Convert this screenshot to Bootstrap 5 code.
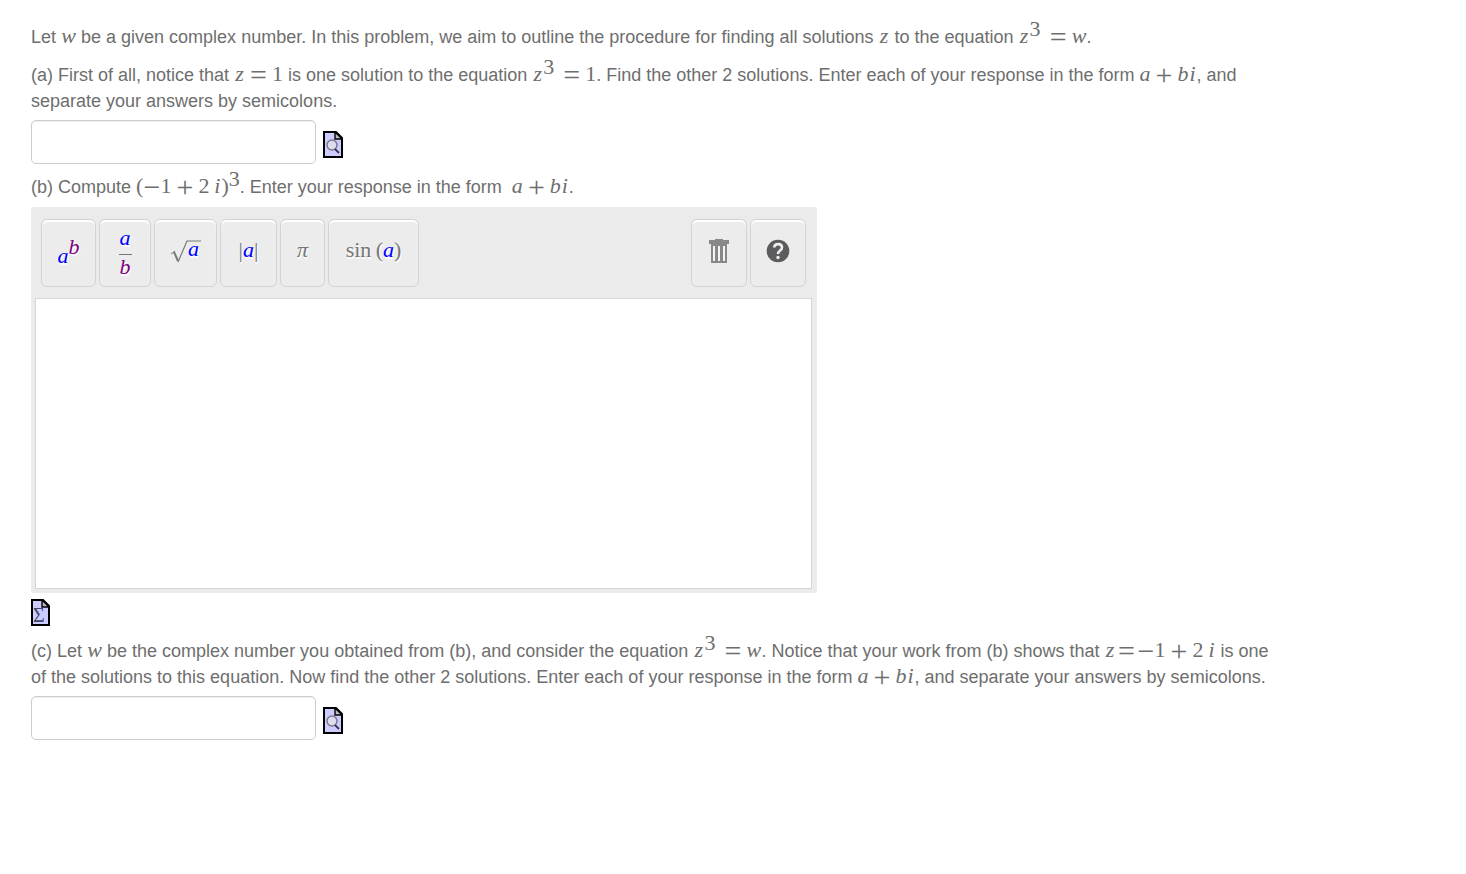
<!DOCTYPE html>
<html lang="en">
<head>
<meta charset="utf-8">
<meta name="viewport" content="width=device-width, initial-scale=1">
<title>Complex cube roots</title>
<link href="https://cdn.jsdelivr.net/npm/bootstrap@5.3.0/dist/css/bootstrap.min.css" rel="stylesheet">
<style>
  body { font: 18px/26px "Liberation Sans", Arial, sans-serif; color: #6e6e6e; background: #fff; }
  .question { max-width: 1310px; padding: 24px 30px 24px 31px; }
  .question p { margin: 0; }

  /* Inline formulas */
  .fm { font-family: "Liberation Serif", "Times New Roman", serif; font-size: 22px; line-height: 0; white-space: nowrap; }
  .fm > * { display: inline-block; text-align: center; line-height: 0; font-size: 22px; }
  .fm i { width: 11px; }
  .fm .wide { width: 15px; }
  .fm .slim { width: 8px; }
  .fm b { font-weight: 400; width: 11px; }
  .fm u { text-decoration: none; width: 27px; font-size: 30px; vertical-align: -4px; }
  .fm u.neg { width: 17px; }
  .fm u.tight { width: 22px; }
  .fm .gap { width: 4px; }
  .fm sup { width: 11px; top: 0; vertical-align: 7px; }

  .answer { width: 285px; height: 44px; border: 1px solid #ccc; border-radius: 5px; box-shadow: inset 0 1px 1px rgba(0,0,0,.075); }
  .page-btn { line-height: 0; margin-bottom: 2px; }
  .answer-row { gap: 7px; margin-top: 6px; }
  .answer-row .page-btn { margin-bottom: 6px; }
  .part { padding-top: 10px; }

  /* Equation editor */
  .editor { max-width: 786px; margin: 7px 0 6px; background: #ebebeb; border-radius: 3px; padding: 12px 5px 4px 4px; }
  .tools { gap: 3px; padding: 0 6px; margin-bottom: 11px; }
  .tool { height: 68px; padding: 0 0 6px; background: #ececec; border: 1px solid #d3d3d3; border-radius: 6px; box-shadow: inset 0 2px 1px #fff; color: #777; font: 22px/24px "Liberation Serif", "Times New Roman", serif; text-shadow: 1px 2px 1px #fff; }
  .w45 { width: 45px; } .w52 { width: 52px; } .w55 { width: 55px; } .w56 { width: 56px; } .w57 { width: 57px; } .w63 { width: 63px; } .w91 { width: 91px; }
  .va { color: #00f; font-style: italic; }
  .vb { color: #800080; font-style: italic; }
  .tool sup { font-size: 22px; top: 0; vertical-align: 9px; line-height: 0; }
  .tool .low { display: inline-block; padding-top: 12px; }
  .frac { display: inline-flex; flex-direction: column; padding-top: 4px; }
  .frac .vb { border-top: 1px solid #777; padding: 0 1px; margin-top: 4px; }
  .canvas { height: 291px; border: 1px solid #d6d6d6; border-radius: 0; resize: none; background: #fff; }
</style>
</head>
<body>
<main class="question">
  <p>Let <span class="fm"><i class="wide">w</i></span> be a given complex number. In this problem, we aim to outline the procedure for finding all solutions <span class="fm"><i>z</i></span> to the equation <span class="fm"><i>z</i><sup>3</sup><span class="gap"></span><u>=</u><i class="wide">w</i></span>.</p>
  <p class="pt-2 mt-1"><label for="ansA">(a) First of all, notice that <span class="fm"><i>z</i><u>=</u><b>1</b></span> is one solution to the equation <span class="fm"><i>z</i><sup>3</sup><span class="gap"></span><u>=</u><b>1</b></span>. Find the other 2 solutions. Enter each of your response in the form <span class="fm"><i>a</i><u>+</u><b><i>b</i></b><i class="slim">i</i></span>, and separate your answers by semicolons.</label></p>
  <div class="answer-row d-flex align-items-end">
    <input class="form-control answer" id="ansA" type="text">
    <button type="button" class="page-btn btn border-0 p-0" aria-label="Preview answer (a)"><svg width="20" height="27" viewBox="0 0 20 27"><path d="M1 1h12l6 6v19H1z" fill="#ccf" stroke="#000" stroke-width="2"/><path d="M12 1v7h7z" fill="#bbc" stroke="#000" stroke-width="1.4"/><circle cx="9" cy="14" r="5" fill="#dde" stroke="#778" stroke-width="1.4"/><path d="M12 18l4 4" stroke="#335" stroke-width="1.8"/></svg></button>
  </div>
  <p class="part">(b) Compute <span class="fm"><span>(</span><u class="neg">−</u><b>1</b><u>+</u><b>2</b><span class="gap"></span><i class="slim">i</i><span>)</span><sup>3</sup></span>. Enter your response in the form&nbsp; <span class="fm"><i>a</i><u>+</u><b><i>b</i></b><i class="slim">i</i></span>.</p>

  <div class="editor">
    <div class="tools d-flex flex-wrap" role="toolbar" aria-label="Equation tools">
      <button type="button" class="tool w55"><span class="low"><span class="va">a</span><sup class="vb">b</sup></span></button>
      <button type="button" class="tool w52"><span class="frac"><span class="va">a</span><span class="vb">b</span></span></button>
      <button type="button" class="tool w63" aria-label="Square root of a"><svg width="32" height="26" viewBox="0 0 32 26" overflow="visible"><path d="M1 17l4-3" fill="none" stroke="#777"/><path d="M4 15l4 9" fill="none" stroke="#777" stroke-width="2"/><path d="M8 25L17 4h14" fill="none" stroke="#777" stroke-width="1.2"/><text x="18" y="19" font-size="22" font-style="italic" fill="#00f">a</text></svg></button>
      <button type="button" class="tool w57">|<span class="va">a</span>|</button>
      <button type="button" class="tool w45"><i>π</i></button>
      <button type="button" class="tool w91">sin&thinsp;(<span class="va">a</span>)</button>
      <button type="button" class="tool w56 ms-auto" aria-label="Clear"><svg width="22" height="25" viewBox="0 0 22 25"><path d="M7 2V1h8v1h6v4H1V2z" fill="#888"/><path d="M3 6h16v19H3z" fill="#888"/><path d="M6 8v15M11 8v15M16 8v15" stroke="#f4f4f4" stroke-width="2"/></svg></button>
      <button type="button" class="tool w56" aria-label="Help"><svg width="24" height="24" viewBox="0 0 24 24"><circle cx="12" cy="12" r="11.300" fill="#5c5c5e"/><path d="M8.200 8.500C8.500 4 16 4 16 8.500c0 3-4 3-4 6.500" fill="none" stroke="#eee" stroke-width="2.600"/><circle cx="12" cy="18.500" r="1.700" fill="#eee"/></svg></button>
    </div>
    <textarea class="canvas d-block w-100" aria-label="Response for part (b)"></textarea>
  </div>
  <button type="button" class="page-btn btn border-0 p-0 d-block" aria-label="Equation response"><svg width="19" height="27" viewBox="0 0 19 27"><path d="M1 1h11l6 6v19H1z" fill="#ccf" stroke="#000" stroke-width="2"/><path d="M11 1v7h7z" fill="#bbc" stroke="#000" stroke-width="1.4"/><text x="2" y="23" font-family="Liberation Serif" font-size="20" fill="#446">Σ</text></svg></button>

  <p class="part"><label for="ansC">(c) Let <span class="fm"><i class="wide">w</i></span> be the complex number you obtained from (b), and consider the equation <span class="fm"><i>z</i><sup>3</sup><span class="gap"></span><u>=</u><i class="wide">w</i></span>. Notice that your work from (b) shows that <span class="fm"><i>z</i><u class="tight">=</u><u class="neg">−</u><b>1</b><u>+</u><b>2</b><span class="gap"></span><i class="slim">i</i></span> is one of the solutions to this equation. Now find the other 2 solutions. Enter each of your response in the form <span class="fm"><i>a</i><u>+</u><b><i>b</i></b><i class="slim">i</i></span>, and separate your answers by semicolons.</label></p>
  <div class="answer-row d-flex align-items-end">
    <input class="form-control answer" id="ansC" type="text">
    <button type="button" class="page-btn btn border-0 p-0" aria-label="Preview answer (c)"><svg width="20" height="27" viewBox="0 0 20 27"><path d="M1 1h12l6 6v19H1z" fill="#ccf" stroke="#000" stroke-width="2"/><path d="M12 1v7h7z" fill="#bbc" stroke="#000" stroke-width="1.4"/><circle cx="9" cy="14" r="5" fill="#dde" stroke="#778" stroke-width="1.4"/><path d="M12 18l4 4" stroke="#335" stroke-width="1.8"/></svg></button>
  </div>
</main>
<script src="https://cdn.jsdelivr.net/npm/bootstrap@5.3.0/dist/js/bootstrap.bundle.min.js"></script>
</body>
</html>
